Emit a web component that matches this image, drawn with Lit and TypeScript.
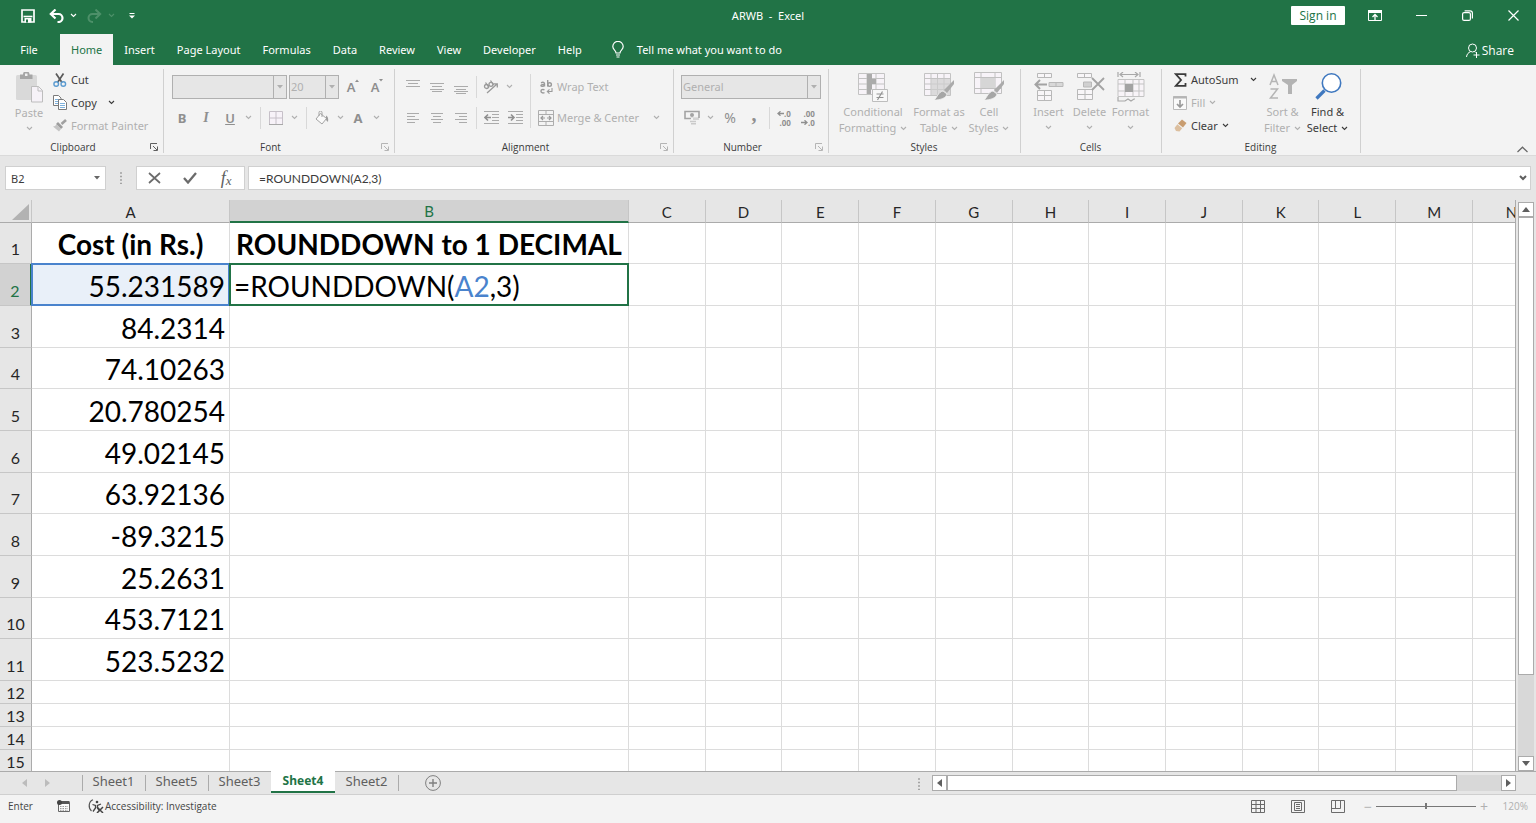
import { LitElement, html, svg, css, nothing } from "lit";
import type { SVGTemplateResult } from "lit";
import { customElement, property } from "lit/decorators.js";
import { classMap } from "lit/directives/class-map.js";

/* ---------- icon drawings ---------- */

type Icon = { w: number; h: number; art: SVGTemplateResult };

const lines = (spec: [number, number, number][], color = "#ababab") =>
  spec.map(([x, y, w]) => svg`<rect x=${x} y=${y} width=${w} height="1" fill=${color} />`);

const brush = svg`<path d="M31 8 L21 18 L24 21 L31 12Z" fill="#ababab"/><path d="M20 19l4 3c-1 4-6 6-13 6 3-2 4-8 9-9z" fill="#a6a6a6" stroke="#f3f3f3" stroke-width=".8"/>`;

const ICONS: Record<string, Icon> = {
  save: { w: 14, h: 14, art: svg`<path d="M1 1h12v12H1z" fill="none" stroke="#fff" stroke-width="1.7"/><path d="M2.5 7.5h9" stroke="#fff" stroke-width="1.6"/><path d="M3.5 9h7v4.500h-7z" fill="#fff"/><path d="M5 10.500h2v3H5z" fill="#217346"/>` },
  undo: { w: 15, h: 14, art: svg`<path d="M2 5h7.500a4 4 0 0 1 0 8H8.500" fill="none" stroke="#fff" stroke-width="2.200"/><path d="M6.500 .5L1.800 5l4.700 4.500" fill="none" stroke="#fff" stroke-width="2.200"/>` },
  redo: { w: 15, h: 14, art: svg`<path d="M13 5H5.500a4 4 0 0 0 0 8H6" fill="none" stroke="#4d9069" stroke-width="2"/><path d="M8.500 .5L13.200 5 8.500 9.500" fill="none" stroke="#4d9069" stroke-width="2"/>` },
  qat: { w: 6, h: 6, art: svg`<path d="M.5 .5h5" stroke="#fff" /><path d="M0 2.500h6L3 5.500z" fill="#fff"/>` },
  ribbonMode: { w: 14, h: 11, art: svg`<path d="M.5 .5h13v10H.5z" fill="none" stroke="#fff"/><path d="M0 0h14v3H0z" fill="#fff"/><path d="M7 10V5M4.500 7L7 4.500 9.500 7" fill="none" stroke="#fff" stroke-width="1.300"/>` },
  minimize: { w: 11, h: 11, art: svg`<path d="M0 5.500h11" stroke="#fff"/>` },
  restore: { w: 11, h: 11, art: svg`<rect x=".6" y="2.600" width="7.800" height="7.800" rx="1.500" fill="none" stroke="#fff" stroke-width="1.200"/><path d="M2.600 .8h5.500a2.300 2.300 0 0 1 2.300 2.300v5.400" fill="none" stroke="#fff" stroke-width="1.200"/>` },
  close: { w: 11, h: 11, art: svg`<path d="M.5 .5l10 10M10.500 .5l-10 10" stroke="#fff" stroke-width="1.200"/>` },
  bulb: { w: 12, h: 17, art: svg`<path d="M4 12c0-2.500-3.200-3.300-3.200-6.400a5.200 5.200 0 0 1 10.400 0C11.200 8.700 8 9.500 8 12zM4 14h4M4.500 16h3" fill="none" stroke="#fff" stroke-width="1.200"/>` },
  share: { w: 14, h: 15, art: svg`<circle cx="6.500" cy="5" r="4" fill="none" stroke="#fff"/><path d="M.5 14c.3-3 2-4.500 4-5.300M8.500 8.700l1 .6M10.500 9v6M7.500 12h6" fill="none" stroke="#fff"/>` },
  paste: { w: 28, h: 31, art: svg`<rect x="1" y="3" width="21" height="25" rx="1.500" fill="#d9d9d9"/><path d="M5 2.500h3a3 3 0 0 1 6.500 0h3V7H5z" fill="#a6a6a6"/><rect x="10" y="1.500" width="2.500" height="2.500" fill="#f0f0f0"/><path d="M16.500 14.500h7l4 4v11.500h-11z" fill="#f6f2f8" stroke="#bdbdbd"/><path d="M23 14.500v4.500h4.500" fill="none" stroke="#bdbdbd"/>` },
  cut: { w: 14, h: 14, art: svg`<path d="M3 .5l6 9M10.500 .5l-6 9" stroke="#5a5a5a" stroke-width="1.700"/><circle cx="3.200" cy="11" r="2.300" fill="none" stroke="#5b9bd0" stroke-width="1.400"/><circle cx="10.300" cy="11" r="2.300" fill="none" stroke="#5b9bd0" stroke-width="1.400"/>` },
  copy: { w: 14, h: 15, art: svg`<path d="M.5 .5h5l2.500 2.500v7.500H.5z" fill="#fff" stroke="#7a7a7a"/><path d="M2 4.500h4M2 6.500h4M2 8.500h3" stroke="#7fb2dc"/><path d="M5.500 4.500h5l3 3v7h-8z" fill="#fff" stroke="#7a7a7a"/><path d="M7 8.500h5M7 10.500h5M7 12.500h5" stroke="#7fb2dc"/>` },
  painter: { w: 14, h: 13, art: svg`<path d="M13 1L8.500 5" stroke="#a0a0a0" stroke-width="2.600"/><path d="M5 3l5 5-2 2-5-5z" fill="#9c9c9c"/><path d="M3.500 5.500L8 10l-2 2.500L0 7.500c1.500 0 2.500-1 3.500-2z" fill="#c4c4c4"/>` },
  launcher: { w: 8, h: 8, art: svg`<path d="M.5 6V.5H7" fill="none" stroke="currentColor"/><path d="M3 3l4 4M7.500 3.500v4H3.500" fill="none" stroke="currentColor"/>` },
  chev: { w: 7, h: 5, art: svg`<path d="M1 1l2.500 2.500L6 1" fill="none" stroke="currentColor" stroke-width="1.100"/>` },
  tri: { w: 6, h: 4, art: svg`<path d="M0 0h6L3 3.500z" fill="currentColor"/>` },
  triUp: { w: 8, h: 5, art: svg`<path d="M0 5h8L4 0z" fill="#5f5f5f"/>` },
  triDown: { w: 8, h: 5, art: svg`<path d="M0 0h8L4 5z" fill="#5f5f5f"/>` },
  triLeft: { w: 5, h: 8, art: svg`<path d="M5 0v8L0 4z" fill="currentColor"/>` },
  triRight: { w: 5, h: 8, art: svg`<path d="M0 0v8l5-4z" fill="currentColor"/>` },
  caretUp: { w: 4, h: 3, art: svg`<path d="M0 3h4L2 .5z" fill="#8f8f8f"/>` },
  caretDown: { w: 4, h: 3, art: svg`<path d="M0 0h4L2 2.500z" fill="#8f8f8f"/>` },
  arrowLeft: { w: 7, h: 5, art: svg`<path d="M1 2.500h6M3.500 .3L1 2.500l2.500 2.200" fill="none" stroke="currentColor" stroke-width="1.300"/>` },
  arrowRight: { w: 7, h: 5, art: svg`<path d="M0 2.500h6M3.500 .3L6 2.500 3.500 4.700" fill="none" stroke="currentColor" stroke-width="1.300"/>` },
  borders: { w: 14, h: 14, art: svg`<path d="M.5 .5h13v13H.5zM7 .5v13M.5 7h13" fill="#f7f2f8" stroke="#c6c0c8"/><path d="M0 13.500h14" stroke="#a8a8a8"/>` },
  bucket: { w: 14, h: 14, art: svg`<path d="M5.500 2.500l6 5-4.500 5.500-6-5z" fill="#fafafa" stroke="#a3a3a3"/><path d="M4 5V1.500a1.500 1.500 0 0 1 3 0V6" fill="none" stroke="#a3a3a3"/><path d="M11 4.500c2 1 2.600 3 2 6.500-1-1-2-1.500-2-3z" fill="#9c9c9c"/>` },
  alignTop: { w: 14, h: 14, art: svg`${lines([[0, 0, 14], [2, 3, 10], [0, 6, 14]])}` },
  alignMiddle: { w: 14, h: 14, art: svg`${lines([[0, 3, 14], [2, 6, 10], [0, 9, 14], [2, 11, 10]])}` },
  alignBottom: { w: 14, h: 14, art: svg`${lines([[0, 6, 14], [2, 9, 10], [0, 11, 14], [2, 13, 10]])}` },
  alignLeft: { w: 12, h: 10, art: svg`${lines([[0, 0, 12], [0, 3, 8], [0, 6, 12], [0, 9, 8]])}` },
  alignCenter: { w: 12, h: 10, art: svg`${lines([[0, 0, 12], [2, 3, 8], [0, 6, 12], [2, 9, 8]])}` },
  alignRight: { w: 12, h: 10, art: svg`${lines([[0, 0, 12], [4, 3, 8], [0, 6, 12], [4, 9, 8]])}` },
  orient: { w: 16, h: 14, art: svg`<g fill="none" stroke="#9a9a9a" stroke-width="1.300"><circle cx="3.500" cy="6.500" r="2"/><path d="M2.500 2.500l3.500 5"/><circle cx="8" cy="4.300" r="2"/><path d="M7.500 .5l3 4.500M4 13l10-9M10.500 3.800H14.300V7.500"/></g>` },
  indentLess: { w: 15, h: 14, art: svg`${lines([[0, 0, 15], [8, 3, 7], [8, 6, 7], [8, 9, 7], [0, 12, 15]])}<path d="M1 6.500h6M4 3.500l-3 3 3 3" fill="none" stroke="#8f8f8f" stroke-width="1.600"/>` },
  indentMore: { w: 15, h: 14, art: svg`${lines([[0, 0, 15], [8, 3, 7], [8, 6, 7], [8, 9, 7], [0, 12, 15]])}<path d="M0 6.500h6M3 3.500l3 3-3 3" fill="none" stroke="#8f8f8f" stroke-width="1.600"/>` },
  wrap: { w: 13, h: 14, art: svg`<g fill="none" stroke="#9a9a9a" stroke-width="1.400"><path d="M1 2.800c2-1 3.500-.5 3.500 1V6.500M4.500 4.500C1.500 4.300 .8 5 1 5.800s2.500 1 3.500-.5"/><path d="M7.700 0v6.500"/><circle cx="9.600" cy="4.600" r="1.800"/><path d="M4.500 9.800c-2-.8-3.500 0-3.500 1.400s1.500 2.200 3.500 1.400"/><path d="M12 8v3.500H7.500M9.500 9.300l-2.200 2.200 2.200 2.200" stroke-width="1.100"/></g>` },
  merge: { w: 16, h: 16, art: svg`<path d="M.5 .5h15v15H.5zM.5 4.500h15M.5 11.500h15M8 .5v4M8 11.500v4" fill="none" stroke="#adadad"/><path d="M3 8h4M9 8h4M5 6L3 8l2 2M11 6l2 2-2 2" fill="none" stroke="#999" stroke-width="1.200"/>` },
  currency: { w: 16, h: 15, art: svg`<path d="M1 1.500h14v7H1z" fill="none" stroke="#a3a3a3" stroke-width="1.600"/><circle cx="8" cy="5" r="2" fill="#a3a3a3"/><path d="M7 8h9v7H6z" fill="#f3f3f3"/><path d="M9 9h6M6 11.500h6M7 13.800h5" stroke="#cacaca" stroke-width="1.600"/>` },
  condFormat: { w: 30, h: 30, art: svg`<path d="M.5 1.500h26v21H.5zM.5 6.500h26M.5 12h26M.5 17.500h26M9 1.500v21M18 1.500v21" fill="#f7f3f8" stroke="#c3c3c3"/><path d="M9 2h5v5H9zM9 7h9v5H9zM9 12h5v5H9zM9 17h4v5H9z" fill="#ababab"/><path d="M14.500 17.500h15v12h-15z" fill="#f8f8f8" stroke="#bdbdbd"/><path d="M18.500 22h7M18.500 25.500h7M24.500 19.500l-5 8.500" stroke="#949494" stroke-width="1.200"/>` },
  formatTable: { w: 32, h: 30, art: svg`<path d="M1.500 1.500h26v22h-26zM1.500 6.500h26M1.500 12h26M1.500 17.500h26M8 1.500v22M14.500 1.500v22M21 1.500v22" fill="#f7f3f8" stroke="#c3c3c3"/><path d="M8 7h19v16H8z" fill="#cfcfcf" opacity=".7"/>${brush}` },
  cellStyles: { w: 32, h: 30, art: svg`<path d="M1.500 .5h27v21h-27zM1.500 5.500h27M1.500 16.500h27M8 .5v21M22 .5v21" fill="#f7f3f8" stroke="#c0c0c0"/><path d="M8 6h14v10H8z" fill="#d6d6d6"/>${brush}` },
  insert: { w: 30, h: 30, art: svg`<path d="M3.500 1.500h14v4h-14zM10.500 1.500v4M3.500 18.500h14v10h-14zM3.500 23.500h14M10.500 18.500v10" fill="#f8f6f8" stroke="#b8b8b8"/><path d="M15 10.500h14v4H15zM22 10.500v4" fill="#d8d8d8" stroke="#b8b8b8"/><path d="M2 12.500h11M6 8l-4.500 4.500L6 17" fill="none" stroke="#a3a3a3" stroke-width="2"/>` },
  del: { w: 30, h: 30, art: svg`<path d="M2.500 1.500h14v4h-14zM9.500 1.500v4M2.500 17.500h15v10h-15zM2.500 22.500h15M10 17.500v10" fill="#f8f6f8" stroke="#b8b8b8"/><path d="M8.500 10h8v5h-8z" fill="#d0d0d0" stroke="#b8b8b8"/><path d="M17 6l12 12M29 6L17 18" stroke="#a3a3a3" stroke-width="1.800"/>` },
  format: { w: 30, h: 30, art: svg`<path d="M2 0v5M24 0v5M4 2.500h18M7 0L4 2.500 7 5M19 0l3 2.500L19 5" fill="none" stroke="#a8a8a8" stroke-width="1.200"/><path d="M2 7.500h26v17H2zM2 12h26M2 19h26M9 7.500v17M17 7.500v17M23 7.500v17" fill="#f8f4f8" stroke="#c3c3c3"/><path d="M9 12h8v8H9z" fill="#a3a3a3"/><path d="M2 25v4h7l3-2 3 2 3-2h1" fill="none" stroke="#a8a8a8" stroke-width="1.200"/>` },
  sum: { w: 13, h: 14, art: svg`<path d="M11.500 3.500V1.200H1.800L7 7l-5.200 5.800h9.700V10" fill="none" stroke="#3b3b3b" stroke-width="1.800"/>` },
  fill: { w: 14, h: 14, art: svg`<path d="M.5 .5h13v13H.5z" fill="#fafafa" stroke="#bababa"/><path d="M0 1.500h14" stroke="#b5b5b5" stroke-width="2"/><path d="M7 4v7M4 8l3 3 3-3" fill="none" stroke="#9a9a9a" stroke-width="1.700"/>` },
  eraser: { w: 13, h: 13, art: svg`<path d="M8 .5L12.500 4 9 8.500 4 4.500z" fill="#c99d70"/><path d="M3.400 5.200L8.200 9.200 5.500 12.500 2 12 .5 9z" fill="#dcbf9f"/>` },
  sortFilter: { w: 30, h: 30, art: svg`<path d="M2 13L6 3l4 10M3.500 9.500h5M2.500 17h7L2.500 26h7.500" fill="none" stroke="#b5b5b5" stroke-width="1.500"/><path d="M14 7h15v2l-5 4v9h-4v-9l-6-4z" fill="#b3b3b3"/>` },
  find: { w: 30, h: 30, art: svg`<circle cx="18.500" cy="11" r="9.200" fill="#fff" stroke="#3f78bf" stroke-width="1.600"/><path d="M11.500 18.500l-8 8" stroke="#3f78bf" stroke-width="3.200"/>` },
  collapse: { w: 11, h: 7, art: svg`<path d="M.5 6L5.500 1.200 10.500 6" fill="none" stroke="#666" stroke-width="1.200"/>` },
  cancel: { w: 13, h: 12, art: svg`<path d="M1 1l11 10M12 1L1 11" stroke="#6b6b6b" stroke-width="1.700"/>` },
  accept: { w: 14, h: 12, art: svg`<path d="M1 6l4 4.500L13 1" fill="none" stroke="#6b6b6b" stroke-width="2.300"/>` },
  fxChev: { w: 8, h: 6, art: svg`<path d="M1 1l3 3 3-3" fill="none" stroke="#5f5f5f" stroke-width="2"/>` },
  corner: { w: 17, h: 16, art: svg`<path d="M17 0v16H0z" fill="#b2b2b2"/>` },
  dots: { w: 2, h: 12, art: svg`<path d="M0 1h2M0 4.500h2M0 8h2M0 11.500h2" stroke="#a3a3a3" stroke-width="1.500"/>` },
  plus: { w: 16, h: 16, art: svg`<circle cx="8" cy="8" r="7.400" fill="none" stroke="#7f7f7f"/><path d="M8 4v8M4 8h8" stroke="#7f7f7f" stroke-width="1.400"/>` },
  macro: { w: 13, h: 12, art: svg`<path d="M1.500 2.500h11v9h-11z" fill="#fafafa" stroke="#666"/><path d="M4 2.500h8.500" stroke="#555" stroke-width="3"/><circle cx="2.500" cy="2.500" r="2.500" fill="#444"/><path d="M3 6.500h8M3 8.500h8M3 10.300h8" stroke="#999" stroke-dasharray="1.500 1"/>` },
  access: { w: 16, h: 14, art: svg`<path d="M5 .8C.5 2.500 0 9 3.500 12" fill="none" stroke="#555" stroke-width="1.200"/><circle cx="9" cy="3" r="1.300" fill="#444"/><path d="M4.500 5.500l3 1v2.500L5 12.500M13 5L9.500 6.500V9l2 3" fill="none" stroke="#444" stroke-width="1.300"/><path d="M9 8l6 6M15 8l-6 6" stroke="#444" stroke-width="1.500"/>` },
  viewNormal: { w: 14, h: 13, art: svg`<path d="M.5 .5h13v12H.5zM.5 4.500h13M.5 8.500h13M5 .5v12M9.500 .5v12" fill="none" stroke="#6b6b6b"/>` },
  viewLayout: { w: 14, h: 13, art: svg`<path d="M.5 .5h13v12H.5z" fill="none" stroke="#6b6b6b"/><path d="M3.500 2.500h7v8h-7z" fill="none" stroke="#6b6b6b"/><path d="M5 4.500h4M5 6.500h4M5 8.500h4" stroke="#6b6b6b"/>` },
  viewBreak: { w: 14, h: 13, art: svg`<path d="M.5 .5h13v12H.5z" fill="none" stroke="#6b6b6b"/><path d="M4.500 .5v8M9.500 .5v8M.5 8.500h9" fill="none" stroke="#6b6b6b"/>` },
};

const icon = (name: string) => {
  const { w, h, art } = ICONS[name];
  return html`<svg width=${w} height=${h} viewBox="0 0 ${w} ${h}" aria-hidden="true">${art}</svg>`;
};

/* ---------- shared styles ---------- */

const base = css`
  :host, * { box-sizing: border-box; }
  :host { font-family: "Noto Sans", "Open Sans", sans-serif; }
  button, input, select { font: inherit; color: inherit; margin: 0; padding: 0; border: 0; border-radius: 0; background: none; }
  button { display: flex; align-items: center; justify-content: center; white-space: nowrap; flex: none; }
  input, select { min-width: 0; outline: 0; appearance: none; }
  svg { display: block; flex: none; }
`;

/* ---------- title bar and tabs ---------- */

@customElement("title-bar")
class TitleBar extends LitElement {
  static styles = [base, css`
    :host { display: block; background: #217346; color: #fff; font-size: 11px; }
    .top { display: grid; grid-template-columns: 1fr auto 1fr; height: 31px; align-items: center; }
    .quick { display: flex; align-items: center; padding-left: 20px; }
    .quick button { width: 16px; height: 24px; }
    .quick .drop { width: 18px; }
    .quick .gap { margin-left: 12px; }
    .quick .again { margin-left: 4px; }
    .quick .off { color: #4d9069; }
    .quick .more { margin-left: 4px; }
    .name { white-space: pre; }
    .window { display: flex; align-items: center; justify-content: flex-end; }
    .window button { width: 46px; height: 31px; }
    .window .sign { width: 54px; height: 19px; background: #fff; color: #217346; border-radius: 1px; margin-right: 7px; font: 12px "Open Sans", sans-serif; }
    .tabs { display: flex; align-items: flex-end; height: 34px; }
    .tab { height: 31px; padding: 0 11px; }
    .file { width: 58px; margin-right: 2px; }
    .active { background: #f3f3f3; color: #217346; }
    .tell { margin-left: 19px; gap: 13px; height: 31px; }
    .share { height: 29px; margin: 0 22px 0 auto; gap: 2px; font: 12px "Open Sans", sans-serif; }
  `];
  render() {
    const tabs = ["File", "Home", "Insert", "Page Layout", "Formulas", "Data", "Review", "View", "Developer", "Help"];
    return html`
      <div class="top">
        <div class="quick">
          <button aria-label="Save">${icon("save")}</button>
          <button class="gap" aria-label="Undo">${icon("undo")}</button>
          <button class="drop" aria-label="Undo list">${icon("chev")}</button>
          <button class="again" aria-label="Redo">${icon("redo")}</button>
          <button class="drop off" aria-label="Redo list">${icon("chev")}</button>
          <button class="more" aria-label="Customize toolbar">${icon("qat")}</button>
        </div>
        <div class="name">ARWB  -  Excel</div>
        <div class="window">
          <button class="sign">Sign in</button>
          <button aria-label="Ribbon display options">${icon("ribbonMode")}</button>
          <button aria-label="Minimize">${icon("minimize")}</button>
          <button aria-label="Restore">${icon("restore")}</button>
          <button aria-label="Close">${icon("close")}</button>
        </div>
      </div>
      <nav class="tabs">
        ${tabs.map((t) => html`<button class=${classMap({ tab: true, file: t === "File", active: t === "Home" })}>${t}</button>`)}
        <button class="tell">${icon("bulb")}Tell me what you want to do</button>
        <button class="share">${icon("share")}Share</button>
      </nav>`;
  }
}

/* ---------- ribbon ---------- */

@customElement("ribbon-group")
class RibbonGroup extends LitElement {
  @property() label = "";
  @property({ type: Boolean }) launcher = false;
  @property({ type: Boolean }) dim = false;
  static styles = [base, css`
    :host { display: flex; flex-direction: column; flex: none; padding-top: 3px; font-size: 11px;
      background: linear-gradient(#d0d0d0, #d0d0d0) right 4px / 1px 84px no-repeat; }
    .body { display: flex; height: 71px; }
    .foot { display: flex; align-items: center; height: 16px; color: #3b3b3b; font: 10px "Open Sans", sans-serif; padding-right: 2px; }
    .label { flex: 1; text-align: center; }
    .open { width: 16px; color: #5f5f5f; }
    .dim { color: #b5b5b5; }
  `];
  render() {
    return html`<div class="body"><slot></slot></div>
      <div class="foot"><span class="label">${this.label}</span>
        ${this.launcher ? html`<button class=${classMap({ open: true, dim: this.dim })} aria-label="${this.label} settings">${icon("launcher")}</button>` : nothing}
      </div>`;
  }
}

@customElement("ribbon-bar")
class RibbonBar extends LitElement {
  static styles = [base, css`
    :host { display: flex; background: #f3f3f3; border-bottom: 1px solid #dadada; color: #b0b0b0; font-size: 11px; overflow: hidden; }
    .clip { width: 164px; } .font { width: 231px; } .align { width: 279px; } .num { width: 155px; }
    .styles { width: 192px; } .cells { width: 141px; } .edit { width: 199px; }
    .big { flex-direction: column; justify-content: flex-start; padding-top: 4px; line-height: 16px; }
    .big svg { margin-bottom: 2px; }
    .big .under { height: 12px; margin: 1px 0 0; }
    .line { display: flex; align-items: center; gap: 4px; }
    .line svg { margin: 0; }
    .on { color: #3b3b3b; }
    .stack { display: flex; flex-direction: column; }
    .stack button { height: 23px; justify-content: flex-start; gap: 4px; }
    .stack .pic { display: flex; width: 14px; justify-content: center; }
    .stack .far { margin-left: 7px; }
    .rows { display: flex; flex-direction: column; padding: 6px 0 0 6px; gap: 6px; }
    .rows.after { padding-left: 2px; }
    .row { display: flex; align-items: center; height: 25px; }
    .tool { width: 24px; height: 24px; font-size: 13px; color: #8f8f8f; }
    .tool.b { font-weight: 700; } .tool.i { font: italic 700 14px "Liberation Serif", serif; } .tool.u { text-decoration: underline; font-weight: 600; }
    .grow { font-weight: 600; } .grow svg { align-self: flex-start; margin-top: 4px; }
    .chev { width: 12px; height: 24px; }
    .sep { width: 1px; height: 22px; background: #d8d8d8; margin: 0 3px 0 6px; }
    .tight { margin: 0 2px 0 3px; }
    .tall { width: 1px; height: 54px; background: #d8d8d8; margin: 6px 5px 0 3px; }
    .combo { position: relative; display: flex; height: 24px; border: 1px solid #b0b0b0; background: #e6e6e6; color: #b0b0b0; }
    .combo select { width: 100%; padding: 0 16px 0 5px; text-align: left; }
    .combo.slim select { padding-left: 1px; }
    .combo .arrow { position: absolute; right: 0; top: 0; width: 13px; height: 100%; border-left: 1px solid #b0b0b0; display: flex; align-items: center; justify-content: center; pointer-events: none; }
    .fontname { width: 115px; margin: 0 2px 0 2px; } .fontsize { width: 50px; margin-right: 2px; } .numfmt { width: 140px; margin-left: 1px; }
    .wide { height: 25px; justify-content: flex-start; gap: 3px; }
    .wide .pic { width: 16px; display: flex; justify-content: center; }
    .wide .chev { display: flex; align-items: center; justify-content: center; margin-left: 8px; }
    .small { display: grid; font-size: 8px; font-weight: 700; line-height: 9px; text-align: right; align-content: center; justify-content: center; }
    .small .with { display: flex; align-items: center; }
    .comma { font: 700 20px/10px "Liberation Serif", serif; padding-bottom: 8px; }
    .pct { font-size: 14px; margin-left: 2px; }
    .paste { width: 34px; margin: 0 7px 0 12px; }
    .cf { width: 74px; margin-left: 7px; } .ft { width: 58px; } .cs { width: 42px; }
    .ce { width: 41px; } .first { margin-left: 7px; }
    .sums { margin-left: 11px; }
    .sf { width: 42px; margin-left: 5px; } .fs { width: 46px; margin-left: 1px; }
    .collapse { margin: auto 8px 2px auto; }
  `];
  private big(cls: string, pic: string, one: string, two?: string) {
    return html`<button class="big ${cls}">${icon(pic)}<span>${one}</span>
      ${two === undefined ? html`<span class="line under">${icon("chev")}</span>` : html`<span class="line">${two}${icon("chev")}</span>`}</button>`;
  }
  private tool(pic: string, name: string) {
    return html`<button class="tool" aria-label=${name}>${icon(pic)}</button>`;
  }
  private chev(name: string) {
    return html`<button class="chev" aria-label=${name}>${icon("chev")}</button>`;
  }
  private item(pic: string, text: string, on: boolean, chev = "") {
    return html`<button class=${on ? "on" : ""}><span class="pic">${icon(pic)}</span><span>${text}</span>
      ${chev ? html`<span class=${chev}>${icon("chev")}</span>` : nothing}</button>`;
  }
  render() {
    return html`
      <ribbon-group class="clip" label="Clipboard" launcher>
        ${this.big("paste", "paste", "Paste")}
        <div class="stack">
          ${this.item("cut", "Cut", true)}${this.item("copy", "Copy", true, "far")}${this.item("painter", "Format Painter", false)}
        </div>
      </ribbon-group>
      <ribbon-group class="font" label="Font" launcher dim>
        <div class="rows">
          <div class="row">
            <label class="combo fontname"><select aria-label="Font name"><option></option></select><span class="arrow">${icon("tri")}</span></label>
            <label class="combo slim fontsize"><select aria-label="Font size"><option>20</option></select><span class="arrow">${icon("tri")}</span></label>
            <button class="tool grow" aria-label="Increase font size">A${icon("caretUp")}</button>
            <button class="tool grow" aria-label="Decrease font size">A${icon("caretDown")}</button>
          </div>
          <div class="row">
            <button class="tool b">B</button><button class="tool i">I</button><button class="tool u">U</button>${this.chev("Underline styles")}
            <span class="sep"></span>${this.tool("borders", "Borders")}${this.chev("Border styles")}
            <span class="sep"></span>${this.tool("bucket", "Fill color")}${this.chev("Fill colors")}
            <button class="tool b">A</button>${this.chev("Font colors")}
          </div>
        </div>
      </ribbon-group>
      <ribbon-group class="align" label="Alignment" launcher dim>
        <div class="rows">
          <div class="row">
            ${this.tool("alignTop", "Top align")}${this.tool("alignMiddle", "Middle align")}${this.tool("alignBottom", "Bottom align")}
            <span class="sep tight"></span>${this.tool("orient", "Orientation")}${this.chev("Orientation options")}
          </div>
          <div class="row">
            ${this.tool("alignLeft", "Align left")}${this.tool("alignCenter", "Center")}${this.tool("alignRight", "Align right")}
            <span class="sep tight"></span>${this.tool("indentLess", "Decrease indent")}${this.tool("indentMore", "Increase indent")}
          </div>
        </div>
        <span class="tall"></span>
        <div class="rows after">
          <button class="wide"><span class="pic">${icon("wrap")}</span>Wrap Text</button>
          <button class="wide"><span class="pic">${icon("merge")}</span>Merge &amp; Center<span class="chev">${icon("chev")}</span></button>
        </div>
      </ribbon-group>
      <ribbon-group class="num" label="Number" launcher dim>
        <div class="rows">
          <div class="row"><label class="combo slim numfmt"><select aria-label="Number format"><option>General</option></select><span class="arrow">${icon("tri")}</span></label></div>
          <div class="row">
            ${this.tool("currency", "Accounting format")}${this.chev("Accounting formats")}
            <button class="tool pct">%</button><button class="tool comma">,</button>
            <span class="sep tight"></span>
            <button class="tool small" aria-label="Increase decimal"><span class="with">${icon("arrowLeft")}.0</span><span>.00</span></button>
            <button class="tool small" aria-label="Decrease decimal"><span>.00</span><span class="with">${icon("arrowRight")}.0</span></button>
          </div>
        </div>
      </ribbon-group>
      <ribbon-group class="styles" label="Styles">
        ${this.big("cf", "condFormat", "Conditional", "Formatting")}${this.big("ft", "formatTable", "Format as", "Table")}${this.big("cs", "cellStyles", "Cell", "Styles")}
      </ribbon-group>
      <ribbon-group class="cells" label="Cells">
        ${this.big("ce first", "insert", "Insert")}${this.big("ce", "del", "Delete")}${this.big("ce", "format", "Format")}
      </ribbon-group>
      <ribbon-group class="edit" label="Editing">
        <div class="stack sums">
          ${this.item("sum", "AutoSum", true, "far")}${this.item("fill", "Fill", false, "near")}${this.item("eraser", "Clear", true, "near")}
        </div>
        ${this.big("sf", "sortFilter", "Sort &", "Filter")}${this.big("fs on", "find", "Find &", "Select")}
      </ribbon-group>
      <button class="collapse" aria-label="Collapse ribbon">${icon("collapse")}</button>`;
  }
}

/* ---------- formula bar ---------- */

@customElement("formula-bar")
class FormulaBar extends LitElement {
  static styles = [base, css`
    :host { display: flex; align-items: center; background: #e6e6e6; padding: 0 5px; height: 44px; color: #3b3b3b; font-size: 11px; }
    .box { display: flex; align-items: center; height: 24px; background: #fff; border: 1px solid #d0d0d0; }
    .namebox { width: 101px; padding: 0 5px; }
    .namebox input { flex: 1; }
    .namebox button { color: #666; }
    .dots { margin: 0 14px; }
    .acts { width: 109px; justify-content: space-around; margin-right: 3px; }
    .acts button { width: 34px; height: 22px; color: #5f5f5f; }
    .acts .fx { font: italic 18px "Liberation Serif", serif; }
    .fx small { font-size: 13px; align-self: flex-end; }
    .edit { flex: 1; padding: 0 3px 0 10px; font: 12px Lato, sans-serif; }
    .edit input { flex: 1; }
  `];
  render() {
    return html`
      <div class="box namebox"><input aria-label="Name box" value="B2" /><button aria-label="Names">${icon("tri")}</button></div>
      <span class="dots">${icon("dots")}</span>
      <div class="box acts">
        <button aria-label="Cancel">${icon("cancel")}</button><button aria-label="Enter">${icon("accept")}</button>
        <button class="fx" aria-label="Insert function">f<small>x</small></button>
      </div>
      <div class="box edit"><input aria-label="Formula" value="=ROUNDDOWN(A2,3)" /><button aria-label="Expand formula bar">${icon("fxChev")}</button></div>`;
  }
}

/* ---------- worksheet ---------- */

const COSTS = ["55.231589", "84.2314", "74.10263", "20.780254", "49.02145", "63.92136", "-89.3215", "25.2631", "453.7121", "523.5232"];
const LETTERS = "ABCDEFGHIJKLMN".split("");

@customElement("sheet-grid")
class SheetGrid extends LitElement {
  static styles = [base, css`
    :host { display: flex; min-height: 0; background: #e6e6e6; font-family: Lato, sans-serif; }
    .view { flex: 1; min-width: 0; overflow: hidden; border-right: 1px solid #ababab; background: #fff; }
    table { width: 100%; table-layout: fixed; border-collapse: separate; border-spacing: 0; }
    .c-row { width: 32px; } .c-a { width: 198px; } .c-b { width: 399px; } .c-n { width: 42px; }
    th, td { padding: 0; overflow: hidden; white-space: nowrap; }
    thead th { height: 23px; background: #e6e6e6; border-bottom: 1px solid #ababab; border-right: 1px solid #c6c6c6; font: 15px/20px Lato, sans-serif; color: #262626; vertical-align: bottom; }
    thead .sel { background: #d2d2d2; color: #217346; border-bottom: 2px solid #217346; line-height: 19px; }
    thead .cut { border-right: 0; }
    .cut span { display: block; width: 77px; }
    .corner svg { margin: 0 2px 2px auto; }
    tbody th { background: #e6e6e6; border-right: 1px solid #ababab; border-bottom: 1px solid #c6c6c6; font: 16px/20px Lato, sans-serif; color: #262626; vertical-align: bottom; }
    tbody tr { height: 42px; }
    tbody tr:nth-child(3n + 1) { height: 41px; }
    tbody .short, tbody .short:nth-child(3n + 1) { height: 23px; }
    tbody .sel { background: #d2d2d2; color: #217346; border-right: 2px solid #217346; }
    .tall th { padding-bottom: 4px; }
    td { border-right: 1px solid #dcdcdc; border-bottom: 1px solid #dcdcdc; font-size: 28px; line-height: 34px; color: #000; vertical-align: bottom; position: relative; }
    .tall td { padding-bottom: 2px; }
    td:last-child { border-right: 0; }
    .title { font-weight: 700; text-align: center; }
    .num { text-align: right; padding-right: 4px; }
    .source, .editing { overflow: visible; }
    .source { background: #e9f0f9; }
    .editing { padding-left: 4px; }
    .frame { position: absolute; inset: -1px; border: 2px solid #4a83cd; pointer-events: none; }
    .frame.green { border-color: #217346; }
    .ref { color: #4a83cd; }
    .scroll { width: 20px; display: flex; flex-direction: column; padding: 2px 2px 0 2px; }
    .scroll button { height: 15px; border: 1px solid #ababab; background: #fff; }
    .track { flex: 1; background: #d8d8d8; }
    .thumb { height: 85%; background: #fff; border: 1px solid #ababab; }
  `];
  private cell(row: number, col: string) {
    if (row === 1 && col === "A") return html`<td class="title">Cost (in Rs.)</td>`;
    if (row === 1 && col === "B") return html`<td class="title">ROUNDDOWN to 1 DECIMAL</td>`;
    if (row === 2 && col === "B") return html`<td class="editing">=ROUNDDOWN(<span class="ref">A2</span>,3)<span class="frame green"></span></td>`;
    if (row >= 2 && row <= 11 && col === "A")
      return html`<td class=${classMap({ num: true, source: row === 2 })}>${COSTS[row - 2]}${row === 2 ? html`<span class="frame"></span>` : nothing}</td>`;
    return html`<td></td>`;
  }
  render() {
    const rows = Array.from({ length: 15 }, (_, i) => i + 1);
    return html`
      <div class="view"><table>
        <colgroup><col class="c-row" /><col class="c-a" /><col class="c-b" />${LETTERS.slice(2, -1).map(() => html`<col />`)}<col class="c-n" /></colgroup>
        <thead><tr><th class="corner">${icon("corner")}</th>
          ${LETTERS.map((l) => html`<th class=${classMap({ sel: l === "B", cut: l === "N" })} scope="col"><span>${l}</span></th>`)}</tr></thead>
        <tbody>${rows.map((r) => html`<tr class=${r > 11 ? "short" : "tall"}><th class=${r === 2 ? "sel" : ""} scope="row">${r}</th>${LETTERS.map((l) => this.cell(r, l))}</tr>`)}</tbody>
      </table></div>
      <div class="scroll"><button aria-label="Scroll up">${icon("triUp")}</button><div class="track"><div class="thumb"></div></div><button aria-label="Scroll down">${icon("triDown")}</button></div>`;
  }
}

/* ---------- sheet tabs and status ---------- */

@customElement("sheet-footer")
class SheetFooter extends LitElement {
  static styles = [base, css`
    :host { display: block; flex: none; color: #5f5f5f; }
    .sheets { display: flex; height: 24px; background: #e6e6e6; border-top: 1px solid #ababab; border-bottom: 1px solid #cfcfcf; font-size: 13px; }
    .nav { display: flex; align-items: center; gap: 18px; padding-left: 22px; width: 82px; color: #bcbcbc; }
    .tab { width: 63px; height: 20px; padding-bottom: 3px; position: relative; }
    .tab::before { content: ""; position: absolute; left: 0; top: 3px; height: 16px; border-left: 1px solid #ababab; }
    .tab.active { width: 64px; height: 22px; margin-top: -1px; padding-bottom: 1px; background: #fff; color: #217346; font-size: 12px; font-weight: 700; border-bottom: 2px solid #217346; }
    .tab.active::before, .tab.active + .tab::before { content: none; }
    .end { width: 1px; height: 16px; margin-top: 3px; background: #ababab; }
    .add { margin: 3px 0 0 26px; height: 16px; }
    .dots { margin: 6px 12px 0 auto; }
    .scroll { display: flex; width: 38%; height: 16px; margin: 3px 20px 0 0; }
    .scroll button { width: 15px; border: 1px solid #ababab; background: #fff; }
    .track { flex: 1; background: #d8d8d8; }
    .thumb { width: 92%; height: 100%; background: #fff; border: 1px solid #ababab; }
    .status { display: flex; align-items: center; height: 28px; padding: 0 8px 6px; background: #f3f3f3; font: 10px "Open Sans", sans-serif; color: #444; }
    .macro { margin: 0 18px 0 24px; }
    .acc { gap: 1px; }
    .right { margin-left: auto; display: flex; align-items: center; }
    .mode { width: 40px; }
    .mode + .zoom { margin-left: 2px; }
    .zoom { width: 16px; height: 16px; color: #b0b0b0; font-size: 14px; }
    .pct { width: 36px; text-align: right; color: #b0b0b0; }
    .range { width: 100px; height: 12px; background: linear-gradient(#777, #777) center / 100% 1px no-repeat; }
    .range::-webkit-slider-thumb { appearance: none; width: 2px; height: 6px; background: #777; }
  `];
  render() {
    return html`
      <div class="sheets">
        <div class="nav"><span>${icon("triLeft")}</span><span>${icon("triRight")}</span></div>
        ${["Sheet1", "Sheet5", "Sheet3", "Sheet4", "Sheet2"].map((s) => html`<button class=${classMap({ tab: true, active: s === "Sheet4" })}>${s}</button>`)}
        <span class="end"></span>
        <button class="add" aria-label="New sheet">${icon("plus")}</button>
        <span class="dots">${icon("dots")}</span>
        <div class="scroll"><button aria-label="Scroll left">${icon("triLeft")}</button><div class="track"><div class="thumb"></div></div><button aria-label="Scroll right">${icon("triRight")}</button></div>
      </div>
      <div class="status">
        <span>Enter</span>
        <button class="macro" aria-label="Record macro">${icon("macro")}</button>
        <button class="acc">${icon("access")}Accessibility: Investigate</button>
        <div class="right">
          <button class="mode" aria-label="Normal view">${icon("viewNormal")}</button>
          <button class="mode" aria-label="Page layout view">${icon("viewLayout")}</button>
          <button class="mode" aria-label="Page break view">${icon("viewBreak")}</button>
          <button class="zoom" aria-label="Zoom out">−</button>
          <input class="range" type="range" aria-label="Zoom" min="0" max="100" value="50" />
          <button class="zoom" aria-label="Zoom in">+</button>
          <span class="pct">120%</span>
        </div>
      </div>`;
  }
}

@customElement("app-root")
class AppRoot extends LitElement {
  static styles = css`
    :host { display: flex; flex-direction: column; height: 100vh; overflow: hidden; }
    title-bar, ribbon-bar, formula-bar { flex: none; }
    sheet-grid { flex: 1; }
  `;
  render() {
    return html`<title-bar></title-bar><ribbon-bar></ribbon-bar><formula-bar></formula-bar><sheet-grid></sheet-grid><sheet-footer></sheet-footer>`;
  }
}
